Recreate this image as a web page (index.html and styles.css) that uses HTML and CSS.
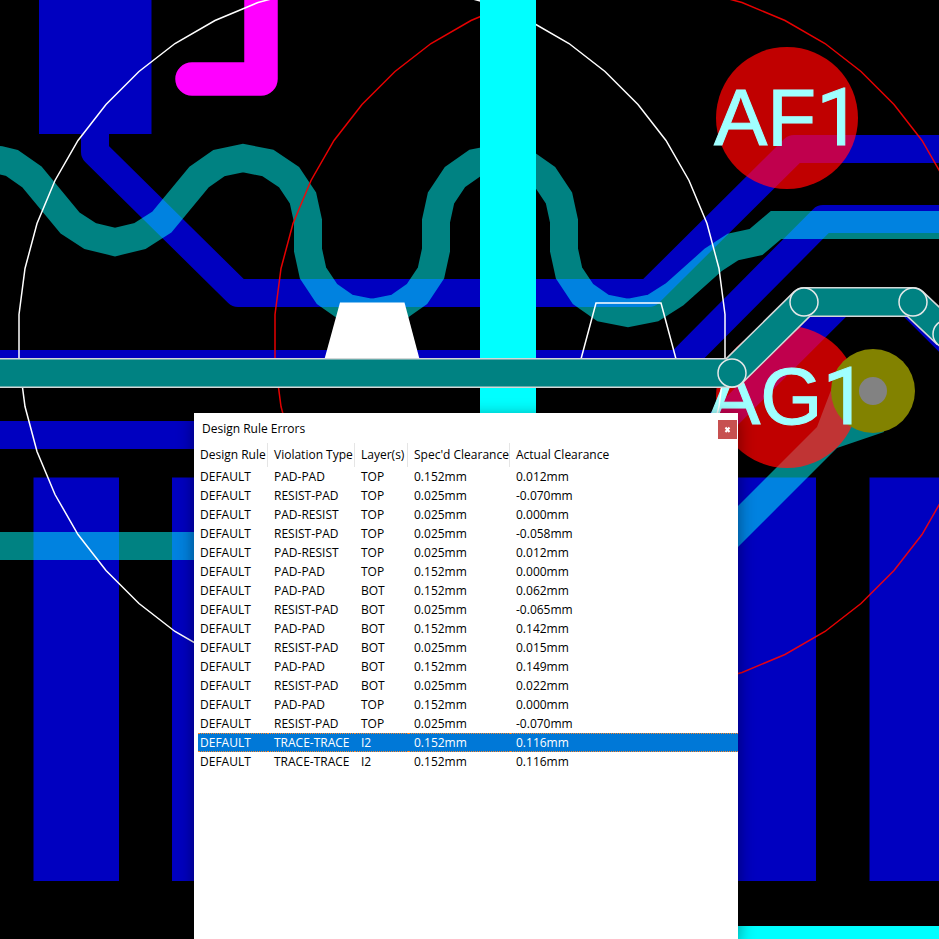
FILE: index.html
```html
<!DOCTYPE html>
<html lang="en">
<head>
<meta charset="utf-8">
<title>Design Rule Errors</title>
<link rel="stylesheet" href="styles.css">
</head>
<body>
<main class="workspace">
<svg class="board" viewBox="0 0 939 939" preserveAspectRatio="xMinYMin slice" role="img" aria-label="Board layout">
  <defs>
    <polygon id="ring" points="353,23 347,69 335,114 317,157 294,197 266,233 233,266 197,294 157,317 114,335 69,347 23,353 -23,353 -69,347 -114,335 -157,317 -197,294 -233,266 -266,233 -294,197 -317,157 -335,114 -347,69 -353,23 -353,-23 -347,-69 -335,-114 -317,-157 -294,-197 -266,-233 -233,-266 -197,-294 -157,-317 -114,-335 -69,-347 -23,-353 23,-353 69,-347 114,-335 157,-317 197,-294 233,-266 266,-233 294,-197 317,-157 335,-114 347,-69 353,-23"/>
    <polyline id="path" points="0,373 732,373 804,302 913,302 947,334"/>
  </defs>
  <rect width="939" height="939"/>

  <!-- bottom copper -->
  <g class="blue-fill">
    <rect x="39" y="0" width="112.500" height="134"/>
    <rect x="33.500" y="477.500" width="85.500" height="403.500"/>
    <rect x="172" y="477.500" width="85" height="403.500"/>
    <rect x="730" y="477.500" width="86" height="403.500"/>
    <rect x="869.500" y="477.500" width="86" height="403.500"/>
  </g>
  <g class="blue-trace">
    <polyline points="95,130 95,152 238,293 649,293 794,149 950,149"/>
    <polyline points="0,364 679,364 823,219 950,219"/>
    <polyline points="0,435 708,435 841,302 909,302 960,353"/>
  </g>

  <!-- inner layer -->
  <g class="screen">
    <polyline class="teal-trace" points="-10,159 0,160 12,163 32,177 70,223 90,236 115,242 140,236 162,222 199,177 219,163 243,158 268,163 289,177 303,198 308,221 308,250 313,273 327,294 347,308 372,313 397,308 417,294 431,273 436,250 436,221 441,198 455,177 475,163 500,158 525,163 545,177 559,198 564,221 564,250 569,273 583,294 603,308 628,313 653,308 675,294 713,260 733,247 756,242 776,225 950,225"/>
    <path class="teal-fill" d="M0 532H712L817 427L833 385L873 391L884 432L837 448L725 560H0Z"/>
  </g>

  <!-- pads -->
  <circle class="dim" cx="787" cy="118" r="71"/>
  <circle class="pad" cx="787" cy="118" r="71"/>
  <circle class="dim" cx="787" cy="397" r="71"/>
  <circle class="pad" cx="787" cy="397" r="71"/>
  <circle cx="873" cy="391" r="42" fill="#828200"/>
  <circle cx="873" cy="391" r="14" fill="#828282"/>

  <text class="pin" x="714" y="145">AF<tspan class="digit">1</tspan></text>
  <text class="pin" x="707" y="424">AG<tspan class="digit">1</tspan></text>

  <!-- outlines -->
  <path d="M261 0V79H192" fill="none" stroke="#f0f" stroke-width="33.500" stroke-linecap="round" stroke-linejoin="round"/>
  <use class="ring red" href="#ring" x="628" y="337.500"/>
  <use class="ring" href="#ring" x="372" y="337.500"/>
  <path d="M340 302.500H404.500L419.500 359H324.500Z" fill="#fff"/>
  <path class="outline" d="M581 359L596 303H661L676 359"/>
  <rect x="480" y="0" width="56" height="460" fill="#0ff"/>
  <rect x="730" y="926" width="209" height="13" fill="#0ff"/>

  <!-- selected trace -->
  <use class="path-edge" href="#path"/>
  <use class="path-core" href="#path"/>
  <g class="joint">
    <circle cx="732" cy="373" r="14"/>
    <circle cx="804" cy="302" r="14"/>
    <circle cx="913" cy="302" r="14"/>
    <circle cx="947" cy="334" r="14"/>
  </g>
</svg>

<section class="dialog" aria-labelledby="dialog-title">
  <header class="titlebar">
    <h1 class="title" id="dialog-title">Design Rule Errors</h1>
    <button class="close" type="button" aria-label="Close"><svg viewBox="0 0 19 19" aria-hidden="true"><path d="M7.500 7.500L11.500 12M11.500 7.500L7.500 12"/></svg></button>
  </header>
  <table class="errors">
    <colgroup><col class="c-rule"><col class="c-type"><col class="c-layer"><col class="c-spec"><col></colgroup>
    <thead><tr><th>Design Rule</th><th>Violation Type</th><th>Layer(s)</th><th>Spec'd Clearance</th><th>Actual Clearance</th></tr></thead>
    <tbody>
      <tr><td>DEFAULT</td><td>PAD-PAD</td><td>TOP</td><td>0.152mm</td><td>0.012mm</td></tr>
      <tr><td>DEFAULT</td><td>RESIST-PAD</td><td>TOP</td><td>0.025mm</td><td>-0.070mm</td></tr>
      <tr><td>DEFAULT</td><td>PAD-RESIST</td><td>TOP</td><td>0.025mm</td><td>0.000mm</td></tr>
      <tr><td>DEFAULT</td><td>RESIST-PAD</td><td>TOP</td><td>0.025mm</td><td>-0.058mm</td></tr>
      <tr><td>DEFAULT</td><td>PAD-RESIST</td><td>TOP</td><td>0.025mm</td><td>0.012mm</td></tr>
      <tr><td>DEFAULT</td><td>PAD-PAD</td><td>TOP</td><td>0.152mm</td><td>0.000mm</td></tr>
      <tr><td>DEFAULT</td><td>PAD-PAD</td><td>BOT</td><td>0.152mm</td><td>0.062mm</td></tr>
      <tr><td>DEFAULT</td><td>RESIST-PAD</td><td>BOT</td><td>0.025mm</td><td>-0.065mm</td></tr>
      <tr><td>DEFAULT</td><td>PAD-PAD</td><td>BOT</td><td>0.152mm</td><td>0.142mm</td></tr>
      <tr><td>DEFAULT</td><td>RESIST-PAD</td><td>BOT</td><td>0.025mm</td><td>0.015mm</td></tr>
      <tr><td>DEFAULT</td><td>PAD-PAD</td><td>BOT</td><td>0.152mm</td><td>0.149mm</td></tr>
      <tr><td>DEFAULT</td><td>RESIST-PAD</td><td>BOT</td><td>0.025mm</td><td>0.022mm</td></tr>
      <tr><td>DEFAULT</td><td>PAD-PAD</td><td>TOP</td><td>0.152mm</td><td>0.000mm</td></tr>
      <tr><td>DEFAULT</td><td>RESIST-PAD</td><td>TOP</td><td>0.025mm</td><td>-0.070mm</td></tr>
      <tr class="selected"><td>DEFAULT</td><td>TRACE-TRACE</td><td>I2</td><td>0.152mm</td><td>0.116mm</td></tr>
      <tr><td>DEFAULT</td><td>TRACE-TRACE</td><td>I2</td><td>0.152mm</td><td>0.116mm</td></tr>
    </tbody>
  </table>
</section>
</main>
</body>
</html>
```
FILE: styles.css
```css
* { box-sizing: border-box; }
body { margin: 0; background: #000; }

.workspace {
  position: relative;
  min-height: 100vh;
  overflow: hidden;
  font: 12px/18px "Open Sans", "Noto Sans", sans-serif;
  color: #000;
}

.board { position: absolute; inset: 0; width: 100%; height: 100%; isolation: isolate; }
.blue-fill { fill: #0000c0; }
.blue-trace { fill: none; stroke: #0000c0; stroke-width: 28; stroke-linejoin: round; }
.screen { mix-blend-mode: screen; }
.teal-trace { fill: none; stroke: #008282; stroke-width: 28; }
.teal-fill { fill: #008282; }
.dim { fill: #000; opacity: 0.6; }
.pad { fill: #c00000; mix-blend-mode: screen; }
.pin { font: 80px "Liberation Sans", Arial, sans-serif; fill: #a0ffff; stroke: #a0ffff; stroke-width: 1px; }
.digit { font-family: Roboto, sans-serif; }
.ring { fill: none; stroke: #fff; stroke-width: 1.5px; }
.red { stroke: #f00; opacity: 0.9; }
.outline { fill: none; stroke: #fff; stroke-width: 1.5px; }
.path-edge { fill: none; stroke: #d4d8d8; stroke-width: 30; stroke-linejoin: round; }
.path-core { fill: none; stroke: #008282; stroke-width: 27; stroke-linejoin: round; }
.joint { fill: #008282; stroke: #e4e8e8; stroke-width: 1.5px; }

/* the dialog floats over the board */
.dialog {
  position: absolute;
  top: 413px;
  bottom: 0;
  left: 194px;
  width: 544px;
  background: #fff;
  box-shadow: 0 4px 16px rgba(0, 0, 0, 0.45);
}
.titlebar { display: flex; align-items: center; justify-content: space-between; height: 30px; padding: 2px 1px 0 8px; }
.title { margin: 0; font-size: 12px; font-weight: 400; }
.close { width: 19px; height: 19px; padding: 0; border: 0; background: #c75050; }
.close svg { display: block; stroke: #fff; stroke-width: 2px; fill: none; }

.errors { width: 540px; margin-left: 4px; table-layout: fixed; border-collapse: separate; border-spacing: 0; }
.c-rule { width: 70px; }
.c-type { width: 87px; }
.c-layer { width: 53px; }
.c-spec { width: 102px; }
.errors th, .errors td { padding: 0 0 0 6px; font-weight: 400; text-align: left; white-space: nowrap; }
.errors th:first-child, .errors td:first-child { padding-left: 2px; }
.errors th { height: 24px; border-right: 1px solid #e5e5e5; }
.errors th:last-child { border-right: 0; }
.errors td { height: 19px; }
.selected td {
  color: #fff;
  background: #0078d7;
  border-top: 1px dotted #ff8728;
  border-bottom: 1px dotted #ff8728;
  line-height: 17px;
}
```
